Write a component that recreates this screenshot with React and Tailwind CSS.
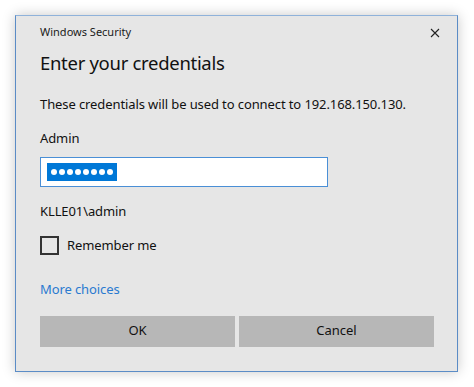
export default function App() {
  const font = { fontFamily: '"Noto Sans", "Open Sans", sans-serif' };
  return (
    <div className="w-[474px] h-[387px] bg-white pt-[15px] pl-[15px]" style={font}>
      <div className="w-[443px] h-[357px] bg-[#e6e6e6] border border-[#5b8cc6] border-t-[#8fb2da] shadow-[0_0_12px_rgba(0,0,0,0.22)] flex flex-col pl-[24px] pr-[23px]">
        <div className="flex items-center justify-between h-[32px] pt-[1px]">
          <span className="text-[11px] text-[#1a1a1a]">Windows Security</span>
          <svg width="10" height="10" viewBox="0 0 10 10" className="mr-[-6px]">
            <path d="M1 1 L9 9 M9 1 L1 9" stroke="#222" strokeWidth="1.1" fill="none" />
          </svg>
        </div>
        <div className="text-[18.5px] leading-[28px] tracking-[-0.3px] text-[#111] mt-[1px]">Enter your credentials</div>
        <div className="text-[13px] leading-[18px] tracking-[-0.1px] text-[#111] mt-[18px]">
          These credentials will be used to connect to 192.168.150.130.
        </div>
        <div className="text-[13px] leading-[18px] tracking-[-0.1px] text-[#111] mt-[16px]">Admin</div>
        <div className="mt-[10px] w-[288px] h-[30px] bg-white border border-[#4a8fd6] flex items-center pl-[6px]">
          <div className="h-[18px] w-[70px] bg-[#0078d7] flex items-center justify-center gap-[2px]">
            {Array.from({ length: 8 }).map((_, i) => (
              <span key={i} className="w-[6px] h-[6px] rounded-full bg-white" />
            ))}
          </div>
        </div>
        <div className="text-[13px] leading-[18px] tracking-[-0.1px] text-[#111] mt-[15px]">KLLE01\admin</div>
        <div className="flex items-center mt-[16px]">
          <div className="w-[19px] h-[19px] border-2 border-[#333] bg-[#e6e6e6]" />
          <span className="text-[13px] tracking-[-0.1px] text-[#111] ml-[8px]">Remember me</span>
        </div>
        <div className="text-[13px] leading-[18px] tracking-[-0.1px] text-[#2a7ad0] mt-[24px]">More choices</div>
        <div className="flex gap-[4px] mt-[18px] w-[394px]">
          <div className="flex-1 h-[31px] bg-[#b7b7b7] flex items-center justify-center text-[13px] text-[#111]">OK</div>
          <div className="flex-1 h-[31px] bg-[#b7b7b7] flex items-center justify-center text-[13px] text-[#111]">Cancel</div>
        </div>
      </div>
    </div>
  );
}
